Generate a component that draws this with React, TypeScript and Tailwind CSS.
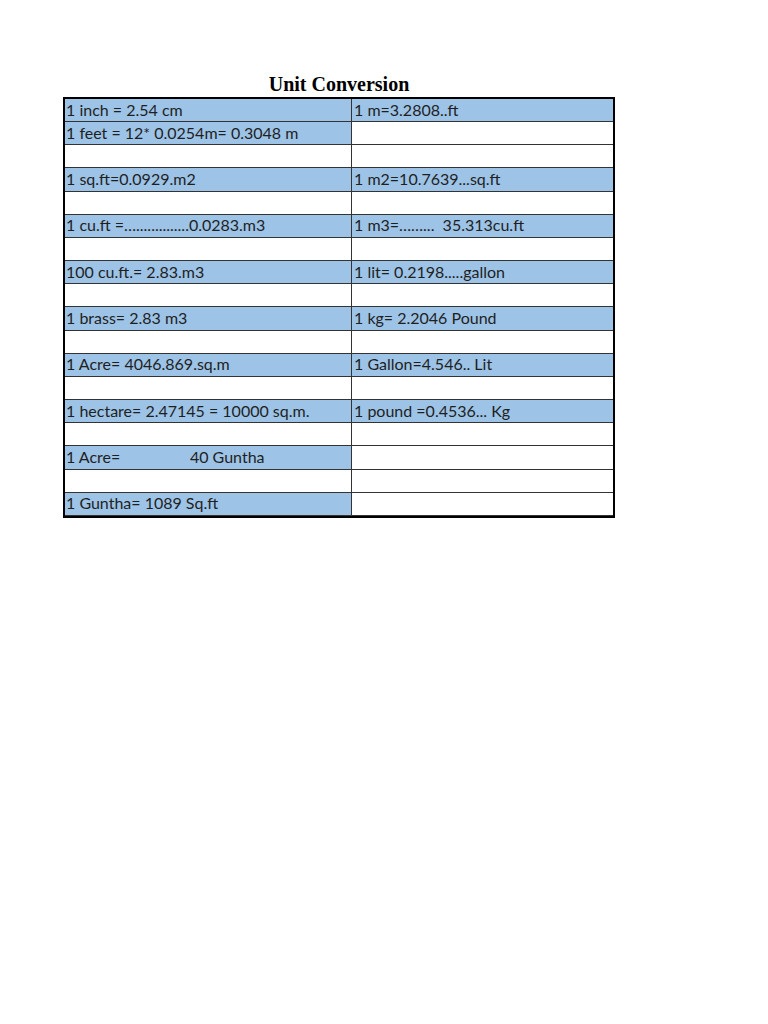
import React from "react";

const rows: [string, string, boolean, boolean][] = [
  ["1 inch = 2.54 cm", "1 m=3.2808..ft", true, true],
  ["1 feet = 12* 0.0254m= 0.3048 m", "", true, false],
  ["", "", false, false],
  ["1 sq.ft=0.0929.m2", "1 m2=10.7639...sq.ft", true, true],
  ["", "", false, false],
  ["1 cu.ft =…..............0.0283.m3", "1 m3=……...  35.313cu.ft", true, true],
  ["", "", false, false],
  ["100 cu.ft.= 2.83.m3", "1 lit= 0.2198.....gallon", true, true],
  ["", "", false, false],
  ["1 brass= 2.83 m3", "1 kg= 2.2046 Pound", true, true],
  ["", "", false, false],
  ["1 Acre= 4046.869.sq.m", "1 Gallon=4.546.. Lit", true, true],
  ["", "", false, false],
  ["1 hectare= 2.47145 = 10000 sq.m.", "1 pound =0.4536... Kg", true, true],
  ["", "", false, false],
  ["1 Acre=                 40 Guntha", "", true, false],
  ["", "", false, false],
  ["1 Guntha= 1089 Sq.ft", "", true, false],
];

export default function App() {
  return (
    <div className="w-[768px] h-[1024px] bg-white pt-[72px] pl-[63px]">
      <div className="w-[552px]">
        <div
          className="text-center font-bold text-[20px] leading-[24px] h-[25px] text-black"
          style={{ fontFamily: '"Liberation Serif", serif' }}
        >
          Unit Conversion
        </div>
        <div
          className="grid grid-cols-[287px_1fr] grid-rows-[repeat(18,1fr)] h-[421px] border-2 border-black bg-[#333]"
          style={{ fontFamily: 'Lato, "Open Sans", sans-serif' }}
        >
          {rows.map(([a, b, ba, bb], i) => (
            <React.Fragment key={i}>
              <div
                className={`${ba ? "bg-[#9dc3e6]" : "bg-white"} border-b border-r border-[#333] flex items-center pl-[1px] pb-[1px] text-[16px] leading-[18px] text-[#1f1f1f] whitespace-pre overflow-hidden`}
              >
                {a}
              </div>
              <div
                className={`${bb ? "bg-[#9dc3e6]" : "bg-white"} border-b border-[#333] flex items-center pl-[2px] pb-[1px] text-[16px] leading-[18px] text-[#1f1f1f] whitespace-pre overflow-hidden`}
              >
                {b}
              </div>
            </React.Fragment>
          ))}
        </div>
      </div>
    </div>
  );
}
